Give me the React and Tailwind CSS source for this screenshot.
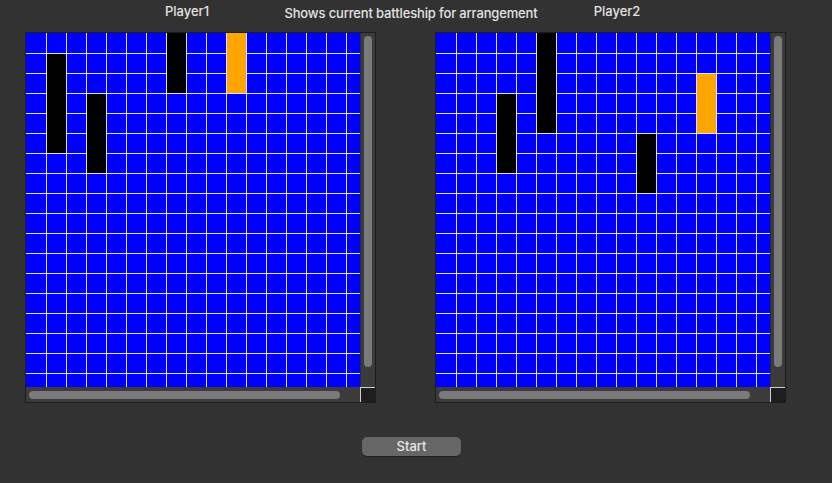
import React from 'react';

const COLS = 18;
const ROWS = 19;

const boards = [
  {
    name: 'Player1',
    ships: [
      { col: 1, row: 1, len: 5, color: 'black' },
      { col: 3, row: 3, len: 4, color: 'black' },
      { col: 7, row: 0, len: 3, color: 'black' },
      { col: 10, row: 0, len: 3, color: 'orange' },
    ],
  },
  {
    name: 'Player2',
    ships: [
      { col: 5, row: 0, len: 5, color: 'black' },
      { col: 3, row: 3, len: 4, color: 'black' },
      { col: 10, row: 5, len: 3, color: 'black' },
      { col: 13, row: 2, len: 3, color: 'orange' },
    ],
  },
];

function Board({ ships }) {
  const shipCells = ships.reduce((n, s) => n + s.len, 0);
  const water = COLS * ROWS - shipCells;

  return (
    <div className="flex flex-col border border-[#1c1c1c] bg-[#3a3a3a]">
      <div className="flex">
        <div className="w-[334px] h-[354px] overflow-hidden bg-[#e2e2e2]">
          <div className="grid grid-cols-[20px_repeat(17,19px)] grid-rows-[20px_repeat(18,19px)] gap-px">
            {ships.map((s, i) => (
              <div
                key={'s' + i}
                className={s.color === 'orange' ? 'bg-[#ffa500]' : 'bg-black'}
                style={{ gridColumn: `${s.col + 1} / span 1`, gridRow: `${s.row + 1} / span ${s.len}` }}
              />
            ))}
            {Array.from({ length: water }).map((_, i) => (
              <div key={i} className="bg-[#0000ff]" />
            ))}
          </div>
        </div>
        <div className="w-[15px] h-[354px] bg-[#3b3b3b] border-l border-[#2a2a2a] flex justify-center pt-[3px]">
          <div className="w-[8px] h-[331px] rounded-full bg-[#7a7a7a]" />
        </div>
      </div>
      <div className="flex">
        <div className="w-[334px] h-[15px] bg-[#3b3b3b] flex items-center pl-[3px]">
          <div className="w-[311px] h-[8px] rounded-full bg-[#7a7a7a]" />
        </div>
        <div className="w-[15px] h-[15px] bg-[#1e1e1e] border-l border-t border-[#cfcfcf]" />
      </div>
    </div>
  );
}

export default function App() {
  return (
    <div
      className="w-full h-[483px] bg-[#323232] text-[#e3e3e3] text-[13px] leading-[16px]"
      style={{ fontFamily: 'Inter, "Liberation Sans", sans-serif' }}
    >
      <div className="flex items-start h-[32px]">
        <div className="ml-[125px] w-[124px] text-center pt-[3px] font-medium">Player1</div>
        <div className="w-[324px] text-center pt-[5px] font-medium tracking-[-0.15px]">Shows current battleship for arrangement</div>
        <div className="w-[88px] text-center pt-[3px] font-medium">Player2</div>
      </div>
      <div className="flex gap-[59px] pl-[25px]">
        {boards.map(b => (
          <Board key={b.name} ships={b.ships} />
        ))}
      </div>
      <div className="mt-[34px] pl-[362px]">
        <button className="w-[99px] h-[19px] rounded-[5px] bg-[#666666] text-[#e6e6e6] font-medium leading-[19px] shadow-[0_0.5px_1px_rgba(0,0,0,0.4)]">
          Start
        </button>
      </div>
    </div>
  );
}
